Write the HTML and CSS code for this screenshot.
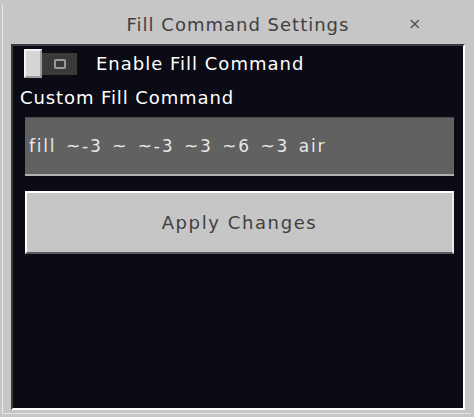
FILE: index.html
```html
<!DOCTYPE html>
<html>
<head>
<meta charset="utf-8">
<link rel="stylesheet" href="styles.css">
</head>
<body>
<div class="window">
  <div class="titlebar">
    <span class="title">Fill Command Settings</span>
    <span class="close">×</span>
  </div>
  <div class="panel">
    <div class="toggle-row">
      <div class="toggle">
        <span class="knob"></span>
        <span class="track"><span class="off-mark"></span></span>
      </div>
      <span class="toggle-label">Enable Fill Command</span>
    </div>
    <div class="field-label">Custom Fill Command</div>
    <div class="input">fill ~-3 ~ ~-3 ~3 ~6 ~3 air</div>
    <div class="button">Apply Changes</div>
  </div>
</div>
</body>
</html>
```

FILE: styles.css
```css
html, body {
  margin: 0;
  padding: 0;
}
body {
  width: 474px;
  height: 417px;
  background: #c6c6c6;
  font-family: "DejaVu Sans", sans-serif;
  overflow: hidden;
}
.window {
  box-sizing: border-box;
  height: 417px;
  padding: 0 9px 7px 11px;
  display: flex;
  flex-direction: column;
  position: relative;
}
.window::before {
  content: "";
  position: absolute;
  left: 2px;
  top: 4px;
  bottom: 3px;
  right: 3px;
  border-left: 1px solid #e6e6e6;
  border-bottom: 1px solid #e6e6e6;
  pointer-events: none;
}
.titlebar {
  height: 44px;
  flex: none;
  position: relative;
  display: flex;
  align-items: center;
  justify-content: center;
}
.title {
  font-size: 18px;
  color: #3f3f3f;
  letter-spacing: 1px;
  margin-top: 5px;
}
.close {
  position: absolute;
  left: 397px;
  top: 14px;
  font-size: 16px;
  color: #555;
}
.panel {
  flex: 1;
  background: #0b0b16;
  border-top: 2px solid #3a3a3a;
  border-left: 2px solid #3a3a3a;
  border-right: 2px solid #ffffff;
  border-bottom: 2px solid #ffffff;
  display: flex;
  flex-direction: column;
  padding: 3px 9px 0 11px;
}
.toggle-row {
  display: flex;
  align-items: center;
  height: 29px;
}
.toggle {
  display: flex;
  align-items: center;
}
.knob {
  box-sizing: border-box;
  width: 18px;
  height: 29px;
  background: #d6d6d6;
  border-top: 2px solid #f4f4f4;
  border-left: 2px solid #f4f4f4;
  border-right: 2px solid #9c9c9c;
  border-bottom: 2px solid #9c9c9c;
}
.track {
  width: 35px;
  height: 22px;
  background: #3a3a3a;
  display: flex;
  align-items: center;
  justify-content: center;
}
.off-mark {
  width: 8px;
  height: 6px;
  border: 2px solid #9a9a9a;
  border-radius: 2px;
}
.toggle-label {
  margin-left: 19px;
  font-size: 18px;
  color: #ffffff;
  letter-spacing: 1px;
}
.field-label {
  margin-top: 9px;
  margin-left: -4px;
  font-size: 18px;
  line-height: 22px;
  color: #ffffff;
  letter-spacing: 0.9px;
}
.input {
  box-sizing: border-box;
  margin-top: 8px;
  margin-left: 1px;
  height: 59px;
  background: #616161;
  border-top: 1px solid #4a4a4a;
  border-bottom: 2px solid #b0b0b0;
  display: flex;
  align-items: center;
  padding-left: 4px;
  font-size: 17px;
  color: #e8e8e8;
  letter-spacing: 1.8px;
  word-spacing: 2.4px;
}
.button {
  box-sizing: border-box;
  margin-top: 15px;
  margin-left: 1px;
  height: 63px;
  background: #c6c6c6;
  border-top: 2px solid #ffffff;
  border-left: 2px solid #ffffff;
  border-right: 2px solid #e8e8e8;
  border-bottom: 2px solid #5a5a5a;
  display: flex;
  align-items: center;
  justify-content: center;
  font-size: 18px;
  color: #404040;
  letter-spacing: 1.6px;
}
```
